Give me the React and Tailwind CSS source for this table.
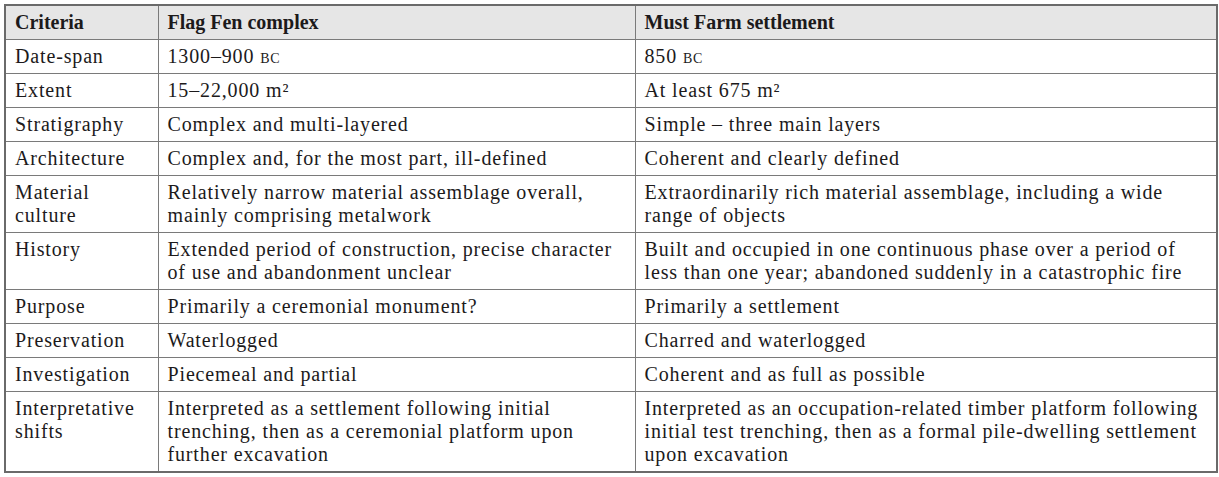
import React from 'react';

const BC = () => <span className="[font-variant-caps:small-caps]">bc</span>;

const rows = [
  ['Date-span', <>1300–900 <BC /></>, <>850 <BC /></>],
  ['Extent', '15–22,000 m²', 'At least 675 m²'],
  ['Stratigraphy', 'Complex and multi-layered', 'Simple – three main layers'],
  ['Architecture', 'Complex and, for the most part, ill-defined', 'Coherent and clearly defined'],
  [
    'Material culture',
    'Relatively narrow material assemblage overall, mainly comprising metalwork',
    'Extraordinarily rich material assemblage, including a wide range of objects',
  ],
  [
    'History',
    'Extended period of construction, precise character of use and abandonment unclear',
    'Built and occupied in one continuous phase over a period of less than one year; abandoned suddenly in a catastrophic fire',
  ],
  ['Purpose', 'Primarily a ceremonial monument?', 'Primarily a settlement'],
  ['Preservation', 'Waterlogged', 'Charred and waterlogged'],
  ['Investigation', 'Piecemeal and partial', 'Coherent and as full as possible'],
  [
    'Interpretative shifts',
    'Interpreted as a settlement following initial trenching, then as a ceremonial platform upon further excavation',
    'Interpreted as an occupation-related timber platform following initial test trenching, then as a formal pile-dwelling settlement upon excavation',
  ],
];

const cell = 'border border-[#7a7a7a] pl-[9px] pr-[6px] pt-[5px] pb-[5px] align-top';

export default function App() {
  return (
    <div className="min-h-[477px] bg-white px-[4px] pt-[4px] font-['Liberation_Serif',serif] text-[20px] leading-[23px] text-[#1c1a1b]">
      <table className="w-[1212px] table-fixed border-collapse border-2 border-[#6a6a6a]">
        <colgroup>
          <col className="w-[153px]" />
          <col className="w-[477px]" />
          <col className="w-[582px]" />
        </colgroup>
        <thead>
          <tr className="bg-[#e6e6e6] text-left">
            <th className={`${cell} font-bold`}>Criteria</th>
            <th className={`${cell} font-bold`}>Flag Fen complex</th>
            <th className={`${cell} font-bold`}>Must Farm settlement</th>
          </tr>
        </thead>
        <tbody className="tracking-[0.85px]">
          {rows.map(([label, flag, must]) => (
            <tr key={label}>
              <td className={cell}>{label}</td>
              <td className={cell}>{flag}</td>
              <td className={cell}>{must}</td>
            </tr>
          ))}
        </tbody>
      </table>
    </div>
  );
}
